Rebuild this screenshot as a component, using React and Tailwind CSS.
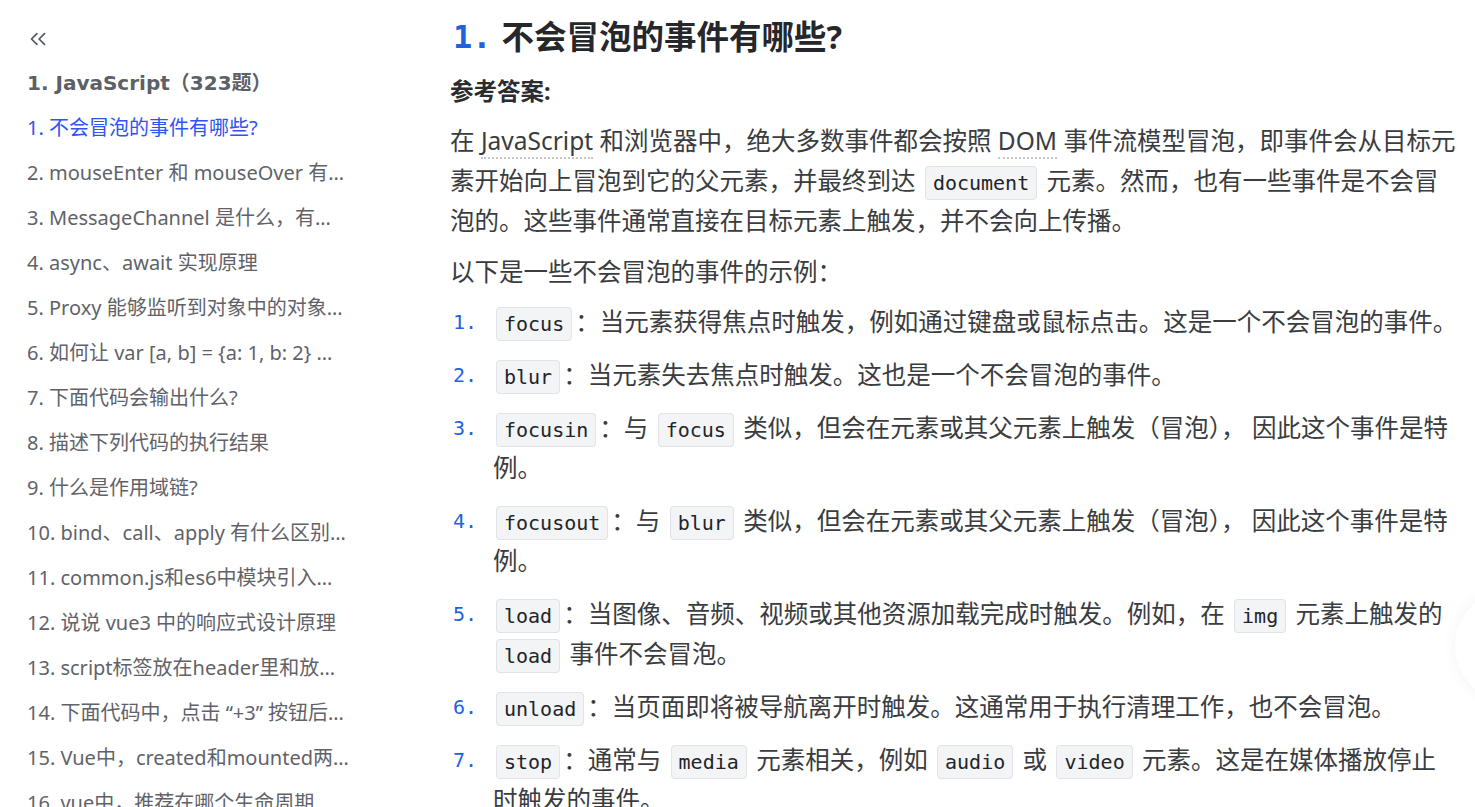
import React from "react";
import { ChevronsLeft } from "lucide-react";

const sideItems = [
  "1. 不会冒泡的事件有哪些?",
  "2. mouseEnter 和 mouseOver 有什么区别？",
  "3. MessageChannel 是什么，有什么使用场景？",
  "4. async、await 实现原理",
  "5. Proxy 能够监听到对象中的对象的引用吗？",
  "6. 如何让 var [a, b] = {a: 1, b: 2} 解构赋值成功？",
  "7. 下面代码会输出什么?",
  "8. 描述下列代码的执行结果",
  "9. 什么是作用域链?",
  "10. bind、call、apply 有什么区别？",
  "11. common.js和es6中模块引入的区别？",
  "12. 说说 vue3 中的响应式设计原理",
  "13. script标签放在header里和放在body底部里有什么区别？",
  "14. 下面代码中，点击 “+3” 按钮后，age 的值是什么？",
  "15. Vue中，created和mounted两个钩子之间调用时间差值受什么影响？",
  "16. vue中，推荐在哪个生命周期发起请求？",
];

const C = ({ children }) => (
  <code className="mx-[3px] rounded-[4px] border border-[#e1e3e8] bg-[#f3f4f6] px-[7px] py-[4px] align-baseline font-['DejaVu_Sans_Mono',monospace] text-[20px] leading-none text-[#222428]">
    {children}
  </code>
);

const Li = ({ n, children }) => (
  <li className="mt-[13px] flex first:mt-0">
    <span className="w-[43px] shrink-0 pl-[3px] font-['DejaVu_Sans_Mono',monospace] text-[20px] text-[#1f62e0]">
      {n}.
    </span>
    <div className="min-w-0 flex-1 whitespace-nowrap">{children}</div>
  </li>
);

const Abbr = ({ children }) => (
  <span className="border-b-2 border-dotted border-[#c4c7cc] leading-none">{children}</span>
);

export default function App() {
  return (
    <div className="relative flex h-[807px] w-[1475px] overflow-hidden bg-white font-['Noto_Sans','Noto_Sans_CJK_SC',sans-serif]">
      {/* Sidebar */}
      <aside className="w-[450px] shrink-0 pl-[25px] pt-[26px] text-[#5f6369]">
        <ChevronsLeft size={26} strokeWidth={1.6} className="text-[#555a60]" />
        <div className="mt-[16px] pl-[2px] font-['DejaVu_Sans','Noto_Sans_CJK_SC',sans-serif] text-[20px] font-bold leading-[30px] text-[#5c6067]">
          1. JavaScript（323题）
        </div>
        <ul className="mt-[15px] pl-[2px]">
          {sideItems.map((t, i) => (
            <li
              key={i}
              className={`h-[45px] w-[322px] truncate text-[20px] leading-[30px] ${
                i === 0 ? "text-[#2e55f2]" : "text-[#5f6369]"
              }`}
            >
              {t}
            </li>
          ))}
        </ul>
      </aside>

      {/* Main */}
      <main className="w-[1025px] shrink-0 pt-[17px] text-[24.5px] leading-[40px] text-[#3a3c40]">
        <h1 className="flex items-center text-[32.5px] font-bold leading-[40px] text-[#25272b]">
          <span className="mr-[10px] pl-[3px] font-['DejaVu_Sans_Mono',monospace] text-[32px] text-[#1f62e0]">1.</span>
          不会冒泡的事件有哪些?
        </h1>
        <div className="mt-[14px] text-[23.5px] font-bold text-[#2a2c30]">参考答案:</div>
        <p className="mt-[10px] whitespace-nowrap">
          在 <Abbr>JavaScript</Abbr> 和浏览器中，绝大多数事件都会按照 <Abbr>DOM</Abbr> 事件流模型冒泡，即事件会从目标元
          <br />
          素开始向上冒泡到它的父元素，并最终到达 <C>document</C> 元素。然而，也有一些事件是不会冒
          <br />
          泡的。这些事件通常直接在目标元素上触发，并不会向上传播。
        </p>
        <p className="mt-[11px]">以下是一些不会冒泡的事件的示例：</p>
        <ol className="mt-[10px]">
          <Li n={1}>
            <C>focus</C>：当元素获得焦点时触发，例如通过键盘或鼠标点击。这是一个不会冒泡的事件。
          </Li>
          <Li n={2}>
            <C>blur</C>：当元素失去焦点时触发。这也是一个不会冒泡的事件。
          </Li>
          <Li n={3}>
            <C>focusin</C>：与 <C>focus</C> 类似，但会在元素或其父元素上触发（冒泡）， 因此这个事件是特
            <br />
            例。
          </Li>
          <Li n={4}>
            <C>focusout</C>：与 <C>blur</C> 类似，但会在元素或其父元素上触发（冒泡）， 因此这个事件是特
            <br />
            例。
          </Li>
          <Li n={5}>
            <C>load</C>：当图像、音频、视频或其他资源加载完成时触发。例如，在 <C>img</C> 元素上触发的
            <br />
            <C>load</C> 事件不会冒泡。
          </Li>
          <Li n={6}>
            <C>unload</C>：当页面即将被导航离开时触发。这通常用于执行清理工作，也不会冒泡。
          </Li>
          <Li n={7}>
            <C>stop</C>：通常与 <C>media</C> 元素相关，例如 <C>audio</C> 或 <C>video</C> 元素。这是在媒体播放停止
            <br />
            时触发的事件。
          </Li>
        </ol>
      </main>

      {/* floating button partly off-screen */}
      <div className="absolute left-[1455px] top-[590px] h-[112px] w-[112px] rounded-full bg-white shadow-[0_0_16px_rgba(0,0,0,0.05)]" />
    </div>
  );
}
